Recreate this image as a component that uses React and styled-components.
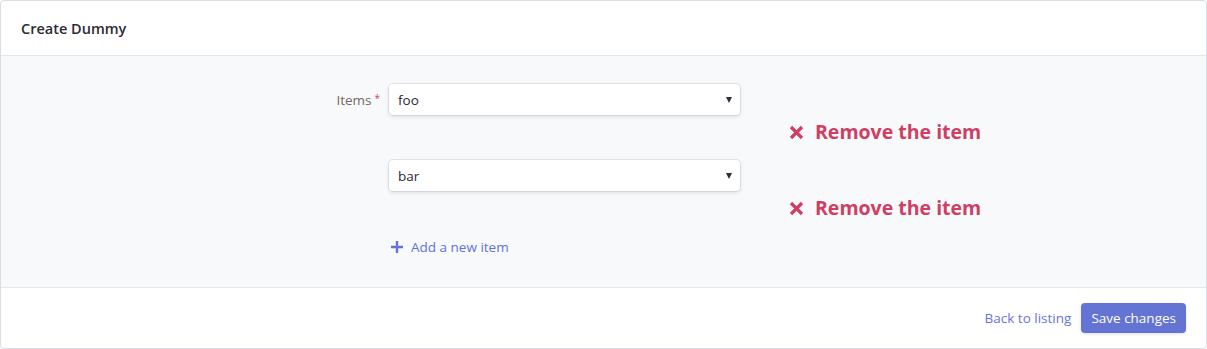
import React from "react";
import styled, { createGlobalStyle } from "styled-components";

const GlobalStyle = createGlobalStyle`
  html, body {
    margin: 0;
    padding: 0;
    background: #ffffff;
  }
  body {
    font-family: "Open Sans", "Noto Sans", "Liberation Sans", sans-serif;
    color: #333;
  }
  * { box-sizing: border-box; }
`;

const Card = styled.div`
  width: 1207px;
  height: 349px;
  border: 1px solid #d9dde5;
  border-radius: 4px;
  background: #fff;
  display: flex;
  flex-direction: column;
  overflow: hidden;
`;

const Header = styled.div`
  height: 55px;
  padding: 0 20px;
  display: flex;
  align-items: center;
  border-bottom: 1px solid #e3e7ee;
`;

const Title = styled.h1`
  margin: 0;
  font-size: 14.5px;
  font-weight: 600;
  color: #2b2b33;
`;

const Body = styled.div`
  flex: 1;
  background: #f8f9fb;
  padding: 28px 0 0;
`;

const FormRow = styled.div`
  display: grid;
  grid-template-columns: 380px 1fr;
  column-gap: 8px;
`;

const Label = styled.label`
  text-align: right;
  font-size: 13.5px;
  color: #74685f;
  line-height: 20px;
  padding-top: 6px;
  padding-right: 1px;
`;

const Required = styled.span`
  color: #cf3e63;
  font-size: 10px;
  vertical-align: top;
  margin-left: 3px;
  position: relative;
  top: -2px;
`;

const Field = styled.div`
  display: flex;
  flex-direction: column;
`;

const SelectBox = styled.div`
  width: 351px;
  height: 31px;
  background: #fff;
  border-radius: 4px;
  box-shadow: 0 0 0 1px rgba(50, 50, 93, 0.1), 0 2px 4px 0 rgba(50, 50, 93, 0.12);
  display: flex;
  align-items: center;
  justify-content: space-between;
  padding: 0 7px 0 9px;
  font-size: 13.5px;
  color: #2b2633;
`;

const Caret = styled.span`
  width: 0;
  height: 0;
  border-left: 3.5px solid transparent;
  border-right: 3.5px solid transparent;
  border-top: 6px solid #2a2f3c;
  margin-right: 1px;
`;

const RemoveRow = styled.div`
  height: 45px;
  padding: 7px 0 0 400px;
`;

const RemoveLink = styled.a`
  display: inline-flex;
  align-items: center;
  gap: 11px;
  font-size: 19.5px;
  font-weight: 700;
  line-height: 20px;
  color: #cf3e63;
  text-decoration: none;
  cursor: pointer;
`;

const AddRow = styled.div`
  padding-top: 0;
`;

const AddLink = styled.a`
  display: inline-flex;
  align-items: center;
  gap: 8px;
  padding-left: 2px;
  font-size: 13.5px;
  line-height: 20px;
  color: #6371d8;
  cursor: pointer;
`;

const Footer = styled.div`
  height: 61px;
  border-top: 1px solid #e3e7ee;
  display: flex;
  align-items: center;
  justify-content: flex-end;
  gap: 10px;
  padding: 0 20px;
`;

const BackLink = styled.a`
  font-size: 13.5px;
  color: #6a74dc;
  cursor: pointer;
`;

const Button = styled.button`
  height: 30px;
  padding: 0 10px;
  border: none;
  border-radius: 4px;
  background: #6474d4;
  color: #fff;
  font-family: inherit;
  font-size: 13.5px;
  box-shadow: 0 1px 3px rgba(50, 50, 93, 0.15);
  cursor: pointer;
`;

const CrossIcon = () => (
  <svg width="15" height="15" viewBox="0 0 15 15">
    <path d="M2 2 L13 13 M13 2 L2 13" stroke="#cf3e63" strokeWidth="3.2" strokeLinecap="butt" />
  </svg>
);

const PlusIcon = () => (
  <svg width="12" height="12" viewBox="0 0 12 12">
    <path d="M6 0 V12 M0 6 H12" stroke="#6371d8" strokeWidth="2.4" />
  </svg>
);

const items = ["foo", "bar"];

export default function App() {
  return (
    <>
      <GlobalStyle />
      <Card>
        <Header>
          <Title>Create Dummy</Title>
        </Header>
        <Body>
          <FormRow>
            <Label>
              Items<Required>*</Required>
            </Label>
            <Field>
              {items.map((item) => (
                <div key={item}>
                  <SelectBox>
                    <span>{item}</span>
                    <Caret />
                  </SelectBox>
                  <RemoveRow>
                    <RemoveLink>
                      <CrossIcon />
                      Remove the item
                    </RemoveLink>
                  </RemoveRow>
                </div>
              ))}
              <AddRow>
                <AddLink>
                  <PlusIcon />
                  Add a new item
                </AddLink>
              </AddRow>
            </Field>
          </FormRow>
        </Body>
        <Footer>
          <BackLink>Back to listing</BackLink>
          <Button>Save changes</Button>
        </Footer>
      </Card>
    </>
  );
}
